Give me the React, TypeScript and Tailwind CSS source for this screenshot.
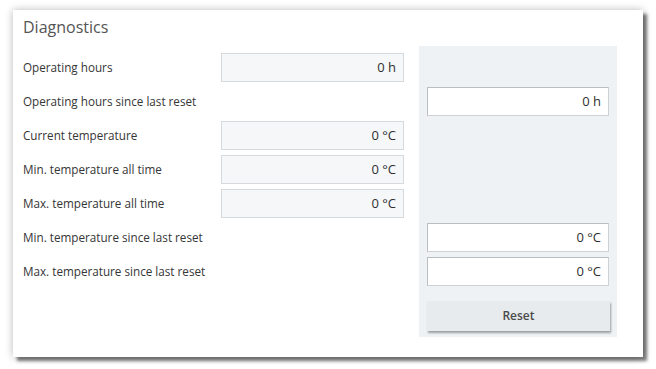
import React from "react";

const font = { fontFamily: '"Open Sans", "Noto Sans", sans-serif' };

function LeftInput({ value }: { value: string }) {
  return (
    <div className="w-[183px] h-[29px] shrink-0 border border-[#d5dade] bg-[#f5f7f9] flex items-center justify-end pr-[7px] text-[13px] text-[#2f2f2f]">
      {value}
    </div>
  );
}

function RightInput({ value }: { value: string }) {
  return (
    <div className="w-[182px] h-[29px] border border-[#cdd2d7] border-t-[#b9bec3] border-l-[#b9bec3] bg-white flex items-center justify-end pr-[7px] text-[13px] text-[#2f2f2f]">
      {value}
    </div>
  );
}

const rows: { label: string; left?: string }[] = [
  { label: "Operating hours", left: "0 h" },
  { label: "Operating hours since last reset" },
  { label: "Current temperature", left: "0 °C" },
  { label: "Min. temperature all time", left: "0 °C" },
  { label: "Max. temperature all time", left: "0 °C" },
  { label: "Min. temperature since last reset" },
  { label: "Max. temperature since last reset" },
];

const rightSlots: (string | null)[] = [null, "0 h", null, null, null, "0 °C", "0 °C"];

export default function App() {
  return (
    <div className="w-[656px] h-[369px] bg-white overflow-hidden pt-[10px] pl-[13px]" style={font}>
      <div className="w-[630px] h-[347px] bg-white shadow-[4px_4px_3px_rgba(0,0,0,0.5),0_0_8px_rgba(0,0,0,0.28)] pl-[10px] pt-[7px]">
        <div className="h-[20px] leading-[20px] text-[16px] text-[#555]">Diagnostics</div>
        <div className="mt-[9px] flex">
          <div className="w-[381px] mr-[15px] pt-[7px] flex flex-col gap-[5px]">
            {rows.map((r) => (
              <div key={r.label} className="h-[29px] flex items-center">
                <div className="flex-1 text-[11.7px] text-[#363636]">{r.label}</div>
                {r.left && <LeftInput value={r.left} />}
              </div>
            ))}
          </div>
          <div className="w-[198px] h-[291px] bg-[#eff2f5] px-[8px] pt-[7px] flex flex-col gap-[5px]">
            {rightSlots.map((s, i) =>
              s ? <RightInput key={i} value={s} /> : <div key={i} className="h-[29px]" />
            )}
            <button className="mt-[10px] w-[183px] h-[30px] bg-[#e8ebee] shadow-[1px_2px_2px_rgba(0,0,0,0.35)] text-[12px] font-semibold text-[#4a4a4a]">
              Reset
            </button>
          </div>
        </div>
      </div>
    </div>
  );
}
